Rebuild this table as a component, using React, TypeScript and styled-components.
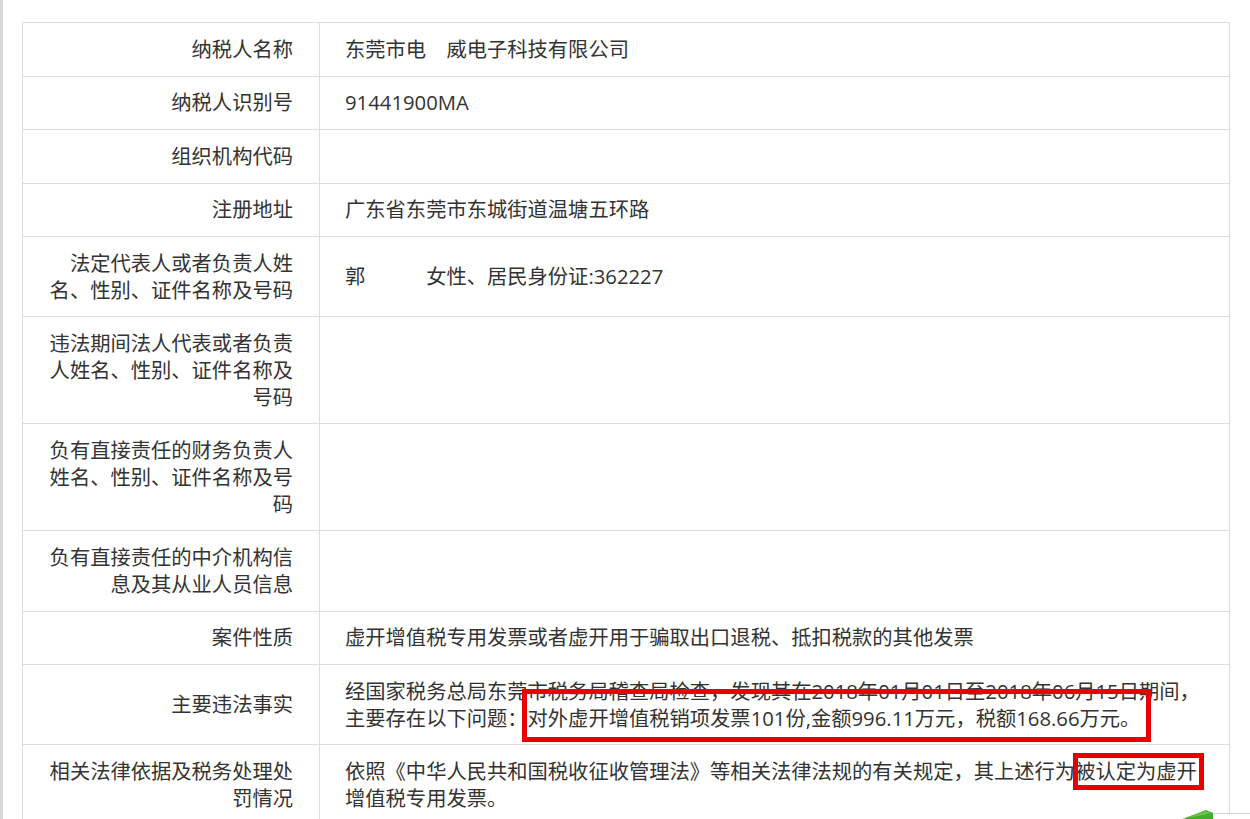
import React from 'react';
import styled, { createGlobalStyle } from 'styled-components';

const GlobalStyle = createGlobalStyle`
  html, body {
    margin: 0;
    padding: 0;
    background: #fff;
  }
  body {
    font-family: "Open Sans", "Noto Sans CJK SC", sans-serif;
    color: #333;
  }
`;

// 页面容器
const Page = styled.div`
  min-height: 100vh;
  box-sizing: border-box;
  border-left: 3px solid #dadada;
  padding: 22px 20px 0 19px;
  overflow: hidden;
`;

// 信息表
const Table = styled.table`
  width: 100%;
  border-collapse: collapse;
  table-layout: fixed;
  font-size: 20.3px;
  line-height: 26.75px;
  text-spacing-trim: space-all;
`;

const Label = styled.td`
  width: 246px;
  padding: 12.875px 25.5px 12.875px 24px;
  border: 1px solid #dedede;
  text-align: right;
  vertical-align: middle;
  color: #333;
`;

const Value = styled.td`
  padding: 12.875px 25px 12.875px 25.5px;
  border: 1px solid #dedede;
  text-align: left;
  vertical-align: middle;
  color: #333;
`;

type Inset = { top: number; right: number; bottom: number; left: number };

// 红框标注
const Marked = styled.span<{ $inset: Inset }>`
  position: relative;

  &::after {
    content: '';
    position: absolute;
    top: ${(p) => p.$inset.top}px;
    right: ${(p) => p.$inset.right}px;
    bottom: ${(p) => p.$inset.bottom}px;
    left: ${(p) => p.$inset.left}px;
    border: 5px solid #e60000;
    pointer-events: none;
  }
`;

// 右下角浮动挂件
const FloatWidget = styled.div`
  position: fixed;
  left: 1213px;
  right: 0;
  top: 813px;
  bottom: 0;
  background: #fff;
  border-top: 1px solid #d4d4d4;
`;

const WidgetTab = styled.svg`
  position: fixed;
  left: 1180px;
  top: 810px;
`;

const rows: { label: string; value: React.ReactNode }[] = [
  { label: '纳税人名称', value: '东莞市电\u3000威电子科技有限公司' },
  { label: '纳税人识别号', value: '91441900MA' },
  { label: '组织机构代码', value: '' },
  { label: '注册地址', value: '广东省东莞市东城街道温塘五环路' },
  { label: '法定代表人或者负责人姓名、性别、证件名称及号码', value: '郭\u3000\u3000\u3000女性、居民身份证:362227' },
  { label: '违法期间法人代表或者负责人姓名、性别、证件名称及号码', value: '' },
  { label: '负有直接责任的财务负责人姓名、性别、证件名称及号码', value: '' },
  { label: '负有直接责任的中介机构信息及其从业人员信息', value: '' },
  { label: '案件性质', value: '虚开增值税专用发票或者虚开用于骗取出口退税、抵扣税款的其他发票' },
  {
    label: '主要违法事实',
    value: (
      <>
        经国家税务总局东莞市税务局稽查局检查，发现其在2018年01月01日至2018年06月15日期间，主要存在以下问题：
        <Marked $inset={{ top: -15, right: -11, bottom: -10, left: -6 }}>
          对外虚开增值税销项发票101份,金额996.11万元，税额168.66万元。
        </Marked>
      </>
    ),
  },
  {
    label: '相关法律依据及税务处理处罚情况',
    value: (
      <>
        依照《中华人民共和国税收征收管理法》等相关法律法规的有关规定，其上述行为
        <Marked $inset={{ top: -4, right: -7, bottom: -5, left: -2 }}>被认定为虚开</Marked>
        增值税专用发票。
      </>
    ),
  },
];

const App = () => {
  return (
    <>
      <GlobalStyle />
      <Page>
        <Table>
          <tbody>
            {rows.map((row, index) => (
              <tr key={index}>
                <Label>{row.label}</Label>
                <Value>{row.value}</Value>
              </tr>
            ))}
          </tbody>
        </Table>
      </Page>
      <FloatWidget />
      <WidgetTab width="34" height="10" viewBox="0 0 34 10">
        <polygon points="0,10 26,0 33,3 33,10" fill="#3fae2a" />
        <polygon points="2,9 25,1 31,3 28,4" fill="#6cc24a" />
      </WidgetTab>
    </>
  );
};

export default App;
